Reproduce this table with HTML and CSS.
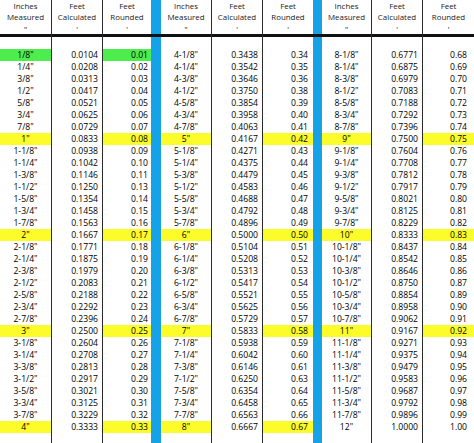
FILE: index.html
```html
<!DOCTYPE html>
<html>
<head>
<meta charset="utf-8">
<link rel="stylesheet" href="styles.css">
</head>
<body>
<div class="sheet">
  <div class="group g1">
    <div class="col ca">
      <div class="hd"><span>Inches</span><span>Measured</span><span>"</span></div>
      <div class="c"></div>
      <div class="c hg">1/8"</div><div class="c">1/4"</div><div class="c">3/8"</div><div class="c">1/2"</div><div class="c">5/8"</div><div class="c">3/4"</div><div class="c">7/8"</div><div class="c hy">1"</div>
      <div class="c">1-1/8"</div><div class="c">1-1/4"</div><div class="c">1-3/8"</div><div class="c">1-1/2"</div><div class="c">1-5/8"</div><div class="c">1-3/4"</div><div class="c">1-7/8"</div><div class="c hy">2"</div>
      <div class="c">2-1/8"</div><div class="c">2-1/4"</div><div class="c">2-3/8"</div><div class="c">2-1/2"</div><div class="c">2-5/8"</div><div class="c">2-3/4"</div><div class="c">2-7/8"</div><div class="c hy">3"</div>
      <div class="c">3-1/8"</div><div class="c">3-1/4"</div><div class="c">3-3/8"</div><div class="c">3-1/2"</div><div class="c">3-5/8"</div><div class="c">3-3/4"</div><div class="c">3-7/8"</div><div class="c hy">4"</div>
    </div>
    <div class="col cb">
      <div class="hd"><span>Feet</span><span>Calculated</span><span>'</span></div>
      <div class="c"></div>
      <div class="c">0.0104</div><div class="c">0.0208</div><div class="c">0.0313</div><div class="c">0.0417</div><div class="c">0.0521</div><div class="c">0.0625</div><div class="c">0.0729</div><div class="c">0.0833</div>
      <div class="c">0.0938</div><div class="c">0.1042</div><div class="c">0.1146</div><div class="c">0.1250</div><div class="c">0.1354</div><div class="c">0.1458</div><div class="c">0.1563</div><div class="c">0.1667</div>
      <div class="c">0.1771</div><div class="c">0.1875</div><div class="c">0.1979</div><div class="c">0.2083</div><div class="c">0.2188</div><div class="c">0.2292</div><div class="c">0.2396</div><div class="c">0.2500</div>
      <div class="c">0.2604</div><div class="c">0.2708</div><div class="c">0.2813</div><div class="c">0.2917</div><div class="c">0.3021</div><div class="c">0.3125</div><div class="c">0.3229</div><div class="c">0.3333</div>
    </div>
    <div class="col cc">
      <div class="hd"><span>Feet</span><span>Rounded</span><span>'</span></div>
      <div class="c"></div>
      <div class="c hg">0.01</div><div class="c">0.02</div><div class="c">0.03</div><div class="c">0.04</div><div class="c">0.05</div><div class="c">0.06</div><div class="c">0.07</div><div class="c hy">0.08</div>
      <div class="c">0.09</div><div class="c">0.10</div><div class="c">0.11</div><div class="c">0.13</div><div class="c">0.14</div><div class="c">0.15</div><div class="c">0.16</div><div class="c hy">0.17</div>
      <div class="c">0.18</div><div class="c">0.19</div><div class="c">0.20</div><div class="c">0.21</div><div class="c">0.22</div><div class="c">0.23</div><div class="c">0.24</div><div class="c hy">0.25</div>
      <div class="c">0.26</div><div class="c">0.27</div><div class="c">0.28</div><div class="c">0.29</div><div class="c">0.30</div><div class="c">0.31</div><div class="c">0.32</div><div class="c hy">0.33</div>
    </div>
  </div>
  <div class="bar b1"><div class="bar-hd"></div></div>
  <div class="group g2">
    <div class="col ca">
      <div class="hd"><span>Inches</span><span>Measured</span><span>"</span></div>
      <div class="c"></div>
      <div class="c">4-1/8"</div><div class="c">4-1/4"</div><div class="c">4-3/8"</div><div class="c">4-1/2"</div><div class="c">4-5/8"</div><div class="c">4-3/4"</div><div class="c">4-7/8"</div><div class="c hy">5"</div>
      <div class="c">5-1/8"</div><div class="c">5-1/4"</div><div class="c">5-3/8"</div><div class="c">5-1/2"</div><div class="c">5-5/8"</div><div class="c">5-3/4"</div><div class="c">5-7/8"</div><div class="c hy">6"</div>
      <div class="c">6-1/8"</div><div class="c">6-1/4"</div><div class="c">6-3/8"</div><div class="c">6-1/2"</div><div class="c">6-5/8"</div><div class="c">6-3/4"</div><div class="c">6-7/8"</div><div class="c hy">7"</div>
      <div class="c">7-1/8"</div><div class="c">7-1/4"</div><div class="c">7-3/8"</div><div class="c">7-1/2"</div><div class="c">7-5/8"</div><div class="c">7-3/4"</div><div class="c">7-7/8"</div><div class="c hy">8"</div>
    </div>
    <div class="col cb">
      <div class="hd"><span>Feet</span><span>Calculated</span><span>'</span></div>
      <div class="c"></div>
      <div class="c">0.3438</div><div class="c">0.3542</div><div class="c">0.3646</div><div class="c">0.3750</div><div class="c">0.3854</div><div class="c">0.3958</div><div class="c">0.4063</div><div class="c">0.4167</div>
      <div class="c">0.4271</div><div class="c">0.4375</div><div class="c">0.4479</div><div class="c">0.4583</div><div class="c">0.4688</div><div class="c">0.4792</div><div class="c">0.4896</div><div class="c">0.5000</div>
      <div class="c">0.5104</div><div class="c">0.5208</div><div class="c">0.5313</div><div class="c">0.5417</div><div class="c">0.5521</div><div class="c">0.5625</div><div class="c">0.5729</div><div class="c">0.5833</div>
      <div class="c">0.5938</div><div class="c">0.6042</div><div class="c">0.6146</div><div class="c">0.6250</div><div class="c">0.6354</div><div class="c">0.6458</div><div class="c">0.6563</div><div class="c">0.6667</div>
    </div>
    <div class="col cc">
      <div class="hd"><span>Feet</span><span>Rounded</span><span>'</span></div>
      <div class="c"></div>
      <div class="c">0.34</div><div class="c">0.35</div><div class="c">0.36</div><div class="c">0.38</div><div class="c">0.39</div><div class="c">0.40</div><div class="c">0.41</div><div class="c hy">0.42</div>
      <div class="c">0.43</div><div class="c">0.44</div><div class="c">0.45</div><div class="c">0.46</div><div class="c">0.47</div><div class="c">0.48</div><div class="c">0.49</div><div class="c hy">0.50</div>
      <div class="c">0.51</div><div class="c">0.52</div><div class="c">0.53</div><div class="c">0.54</div><div class="c">0.55</div><div class="c">0.56</div><div class="c">0.57</div><div class="c hy">0.58</div>
      <div class="c">0.59</div><div class="c">0.60</div><div class="c">0.61</div><div class="c">0.63</div><div class="c">0.64</div><div class="c">0.65</div><div class="c">0.66</div><div class="c hy">0.67</div>
    </div>
  </div>
  <div class="bar b2"><div class="bar-hd"></div></div>
  <div class="group g3">
    <div class="col ca">
      <div class="hd"><span>Inches</span><span>Measured</span><span>"</span></div>
      <div class="c"></div>
      <div class="c">8-1/8"</div><div class="c">8-1/4"</div><div class="c">8-3/8"</div><div class="c">8-1/2"</div><div class="c">8-5/8"</div><div class="c">8-3/4"</div><div class="c">8-7/8"</div><div class="c hy">9"</div>
      <div class="c">9-1/8"</div><div class="c">9-1/4"</div><div class="c">9-3/8"</div><div class="c">9-1/2"</div><div class="c">9-5/8"</div><div class="c">9-3/4"</div><div class="c">9-7/8"</div><div class="c hy">10"</div>
      <div class="c">10-1/8"</div><div class="c">10-1/4"</div><div class="c">10-3/8"</div><div class="c">10-1/2"</div><div class="c">10-5/8"</div><div class="c">10-3/4"</div><div class="c">10-7/8"</div><div class="c hy">11"</div>
      <div class="c">11-1/8"</div><div class="c">11-1/4"</div><div class="c">11-3/8"</div><div class="c">11-1/2"</div><div class="c">11-5/8"</div><div class="c">11-3/4"</div><div class="c">11-7/8"</div><div class="c">12"</div>
    </div>
    <div class="col cb">
      <div class="hd"><span>Feet</span><span>Calculated</span><span>'</span></div>
      <div class="c"></div>
      <div class="c">0.6771</div><div class="c">0.6875</div><div class="c">0.6979</div><div class="c">0.7083</div><div class="c">0.7188</div><div class="c">0.7292</div><div class="c">0.7396</div><div class="c">0.7500</div>
      <div class="c">0.7604</div><div class="c">0.7708</div><div class="c">0.7812</div><div class="c">0.7917</div><div class="c">0.8021</div><div class="c">0.8125</div><div class="c">0.8229</div><div class="c">0.8333</div>
      <div class="c">0.8437</div><div class="c">0.8542</div><div class="c">0.8646</div><div class="c">0.8750</div><div class="c">0.8854</div><div class="c">0.8958</div><div class="c">0.9062</div><div class="c">0.9167</div>
      <div class="c">0.9271</div><div class="c">0.9375</div><div class="c">0.9479</div><div class="c">0.9583</div><div class="c">0.9687</div><div class="c">0.9792</div><div class="c">0.9896</div><div class="c">1.0000</div>
    </div>
    <div class="col cc">
      <div class="hd"><span>Feet</span><span>Rounded</span><span>'</span></div>
      <div class="c"></div>
      <div class="c">0.68</div><div class="c">0.69</div><div class="c">0.70</div><div class="c">0.71</div><div class="c">0.72</div><div class="c">0.73</div><div class="c">0.74</div><div class="c hy">0.75</div>
      <div class="c">0.76</div><div class="c">0.77</div><div class="c">0.78</div><div class="c">0.79</div><div class="c">0.80</div><div class="c">0.81</div><div class="c">0.82</div><div class="c hy">0.83</div>
      <div class="c">0.84</div><div class="c">0.85</div><div class="c">0.86</div><div class="c">0.87</div><div class="c">0.89</div><div class="c">0.90</div><div class="c">0.91</div><div class="c hy">0.92</div>
      <div class="c">0.93</div><div class="c">0.94</div><div class="c">0.95</div><div class="c">0.96</div><div class="c">0.97</div><div class="c">0.98</div><div class="c">0.99</div><div class="c">1.00</div>
    </div>
  </div>
</div>
</body>
</html>
```
FILE: styles.css
```css
html, body {
  margin: 0;
  padding: 0;
  background: #ffffff;
}
body {
  font-family: "Open Sans", Lato, sans-serif;
  color: #000000;
}
.sheet {
  display: flex;
  width: 474px;
  height: 443px;
  overflow: hidden;
}
.group {
  display: flex;
  height: 100%;
}
.col {
  display: flex;
  flex-direction: column;
  height: 100%;
  box-sizing: border-box;
}
.col.cb, .col.cc {
  border-left: 1px solid #2b2b2b;
}
.g1 .ca { width: 51px; }
.g1 .cb { width: 51px; }
.g1 .cc { width: 49px; }
.g2 .ca { width: 50px; }
.g2 .cb { width: 51px; }
.g2 .cc { width: 51px; }
.g3 .ca { width: 49px; }
.g3 .cb { width: 51px; }
.g3 .cc { width: 52px; }

.hd {
  height: 32px;
  flex: 0 0 32px;
  padding-top: 2px;
  border-bottom: 3px solid #111;
  display: flex;
  flex-direction: column;
  align-items: center;
  justify-content: center;
  font-size: 7.9px;
  line-height: 11.5px;
  color: #1a1a1a;
  overflow: hidden;
}
.c {
  height: 12px;
  flex: 0 0 12px;
  font-size: 8.6px;
  line-height: 12px;
  white-space: nowrap;
  overflow: hidden;
}
.ca .c { text-align: center; }
.cb .c { text-align: right; padding-right: 4px; }
.cc .c { text-align: right; }
.g1 .cc .c { padding-right: 3px; }
.g2 .cc .c { padding-right: 5px; }
.g3 .cc .c { padding-right: 7px; }

.hy { background: #fcfc2a; }
.hg { background: #4ded4d; }

.bar {
  height: 100%;
  background: #16a2e6;
}
.b1 { width: 10px; }
.b2 { width: 9px; }
.bar-hd {
  height: 34px;
  border-bottom: 3px solid #111;
}
```
